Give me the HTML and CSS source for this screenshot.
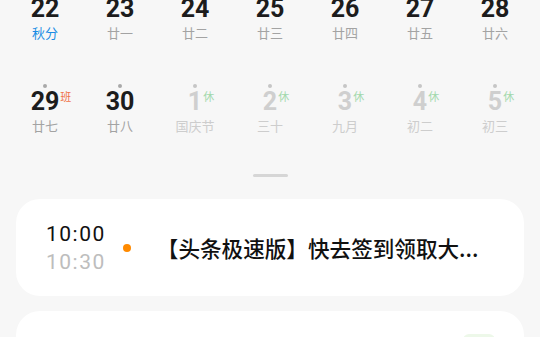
FILE: index.html
```html
<!DOCTYPE html>
<html lang="zh">
<head>
<meta charset="utf-8">
<link rel="stylesheet" href="styles.css">
</head>
<body>
<div class="screen">
  <div class="cal">
    <div class="cell"><span class="dot none"></span><span class="num">22</span><span class="lunar term">秋分</span></div>
    <div class="cell"><span class="dot none"></span><span class="num">23</span><span class="lunar">廿一</span></div>
    <div class="cell"><span class="dot none"></span><span class="num">24</span><span class="lunar">廿二</span></div>
    <div class="cell"><span class="dot none"></span><span class="num">25</span><span class="lunar">廿三</span></div>
    <div class="cell"><span class="dot none"></span><span class="num">26</span><span class="lunar">廿四</span></div>
    <div class="cell"><span class="dot none"></span><span class="num">27</span><span class="lunar">廿五</span></div>
    <div class="cell"><span class="dot none"></span><span class="num">28</span><span class="lunar">廿六</span></div>

    <div class="cell"><span class="dot"></span><span class="num">29<span class="sup work">班</span></span><span class="lunar">廿七</span></div>
    <div class="cell"><span class="dot"></span><span class="num">30</span><span class="lunar">廿八</span></div>
    <div class="cell faded"><span class="dot"></span><span class="num">1<span class="sup rest">休</span></span><span class="lunar">国庆节</span></div>
    <div class="cell faded"><span class="dot"></span><span class="num">2<span class="sup rest">休</span></span><span class="lunar">三十</span></div>
    <div class="cell faded"><span class="dot"></span><span class="num">3<span class="sup rest">休</span></span><span class="lunar">九月</span></div>
    <div class="cell faded"><span class="dot"></span><span class="num">4<span class="sup rest">休</span></span><span class="lunar">初二</span></div>
    <div class="cell faded"><span class="dot"></span><span class="num">5<span class="sup rest">休</span></span><span class="lunar">初三</span></div>
  </div>

  <div class="handle"></div>

  <div class="card">
    <div class="times">
      <span class="t-start">10:00</span>
      <span class="t-end">10:30</span>
    </div>
    <span class="event-dot"></span>
    <div class="title">【头条极速版】快去签到领取大...</div>
  </div>

  <div class="card card-next">
    <span class="tag"></span>
  </div>
</div>
</body>
</html>
```

FILE: styles.css
```css
* { box-sizing: border-box; }

html, body {
  margin: 0;
  padding: 0;
  background: #f7f7f7;
}

.screen {
  width: 540px;
  height: 337px;
  overflow: hidden;
  background: #f7f7f7;
  font-family: Roboto, "Noto Sans CJK SC", sans-serif;
}

.cal {
  margin-top: -9px;
  display: grid;
  grid-template-columns: repeat(7, 75px);
  row-gap: 44px;
  padding: 0 7.5px;
}

.cell {
  display: flex;
  flex-direction: column;
  align-items: center;
}

.dot {
  width: 4px;
  height: 4px;
  border-radius: 50%;
  background: #a9a9a9;
  margin-bottom: 1px;
}

.dot.none { visibility: hidden; }

.num {
  position: relative;
  font-family: Roboto, sans-serif;
  font-weight: 700;
  font-size: 25px;
  line-height: 26px;
  color: #1c1c1c;
}

.sup {
  position: absolute;
  left: 100%;
  top: 1px;
  margin-left: 1px;
  font-family: "Noto Sans CJK SC", sans-serif;
  font-weight: 400;
  font-size: 11px;
  line-height: 12px;
  white-space: nowrap;
}

.sup.work { color: #ef7246; }
.sup.rest { color: #a3d9ad; }

.lunar {
  margin-top: 3px;
  font-family: "Noto Sans CJK SC", sans-serif;
  font-size: 13px;
  line-height: 15px;
  color: #a3a3a3;
}

.lunar.term { color: #1b8de4; }

.faded .num { color: #cfcfcf; }
.faded .lunar { color: #cdcdcd; }
.faded .dot { background: #c6c6c6; }

.handle {
  width: 35px;
  height: 3px;
  border-radius: 2px;
  background: #d6d6d6;
  margin: 41px auto 0;
}

.card {
  margin: 22px 16px 0;
  height: 97px;
  background: #ffffff;
  border-radius: 24px;
  display: flex;
  align-items: center;
  padding-left: 30px;
}

.times {
  display: flex;
  flex-direction: column;
  font-family: Roboto, sans-serif;
  font-size: 21px;
  line-height: 28px;
  letter-spacing: 1.5px;
}

.t-start { color: #111111; }
.t-end { color: #bdbdbd; }

.event-dot {
  width: 8px;
  height: 8px;
  border-radius: 50%;
  background: #ff8a00;
  margin-left: 17px;
}

.title {
  margin-left: 26px;
  font-family: "Noto Sans CJK SC", sans-serif;
  font-weight: 500;
  font-size: 21.6px;
  line-height: 28px;
  color: #111111;
  white-space: nowrap;
}

.card-next {
  margin-top: 15px;
  height: 120px;
  align-items: flex-start;
  justify-content: flex-end;
  padding: 23px 29px 0 0;
}

.tag {
  width: 32px;
  height: 20px;
  border-radius: 6px;
  background: #edf8e9;
}
```
